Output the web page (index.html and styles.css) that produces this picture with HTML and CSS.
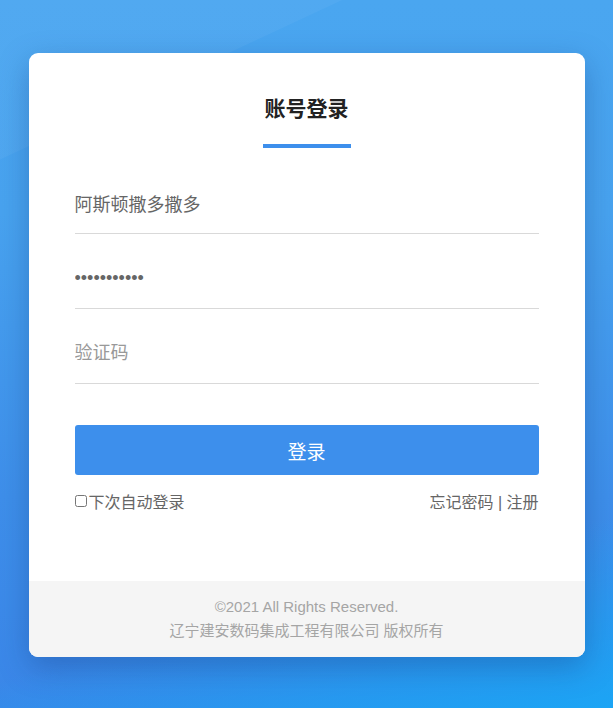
FILE: index.html
```html
<!DOCTYPE html>
<html lang="zh-CN">
<head>
    <meta charset="UTF-8">
    <title>账号登录</title>
    <link rel="stylesheet" href="styles.css">
</head>
<body>
    <div class="login-box">
        <div class="login-main">
            <h2 class="login-title">账号登录</h2>
            <div class="field">
                <input class="field-input" type="text" value="阿斯顿撒多撒多">
            </div>
            <div class="field">
                <input class="field-input pwd" type="password" value="12345678901">
            </div>
            <div class="field">
                <input class="field-input" type="text" placeholder="验证码">
            </div>
            <button class="login-button">登录</button>
            <div class="login-extra">
                <label class="remember"><input type="checkbox">下次自动登录</label>
                <span class="links"><a href="#">忘记密码</a> | <a href="#">注册</a></span>
            </div>
        </div>
        <!-- 版权 -->
        <div class="login-footer">
            <p>©2021 All Rights Reserved.</p>
            <p>辽宁建安数码集成工程有限公司 版权所有</p>
        </div>
    </div>
</body>
</html>
```

FILE: styles.css
```css
html, body {
    height: 100%;
}
body {
    margin: 0;
    font-family: "Liberation Sans", "Noto Sans CJK SC", sans-serif;
    background:
        linear-gradient(155deg, rgba(255,255,255,0.04) 0%, rgba(255,255,255,0.04) 16%, rgba(255,255,255,0) 16.1%),
        linear-gradient(165deg, rgba(24,168,246,0) 78%, rgba(24,168,246,0.55) 90%, rgba(24,168,246,0.9) 100%),
        linear-gradient(to bottom, #4aa6f0 0%, #48a3ef 30%, #3e8fea 70%, #3a86e8 100%);
    overflow: hidden;
}
.login-box {
    width: 556px;
    margin: 53px auto 0;
    background-color: #fff;
    border-radius: 9px;
    overflow: hidden;
    box-shadow: 0 10px 30px rgba(20, 60, 130, 0.35);
}
.login-main {
    padding: 41px 46px 68px;
}
.login-title {
    margin: 0 auto 31px;
    width: 88px;
    font-size: 21px;
    line-height: 30px;
    font-weight: bold;
    color: #222;
    text-align: center;
    padding-bottom: 20px;
    border-bottom: 4px solid #3d8fec;
}
.field {
    border-bottom: 1px solid #d9d9d9;
    margin-bottom: 20px;
}
.field-input {
    display: block;
    box-sizing: border-box;
    width: 100%;
    height: 54px;
    padding: 0 0 6px;
    border: none;
    outline: none;
    font-family: inherit;
    font-size: 18px;
    color: #666;
    background: transparent;
}
.field-input::placeholder {
    color: #999;
}
.login-button {
    display: block;
    width: 100%;
    height: 50px;
    margin-top: 41px;
    border: none;
    border-radius: 3px;
    background-color: #3d8fec;
    color: #fff;
    font-family: inherit;
    font-size: 19px;
    cursor: pointer;
}
.login-extra {
    display: flex;
    justify-content: space-between;
    align-items: center;
    margin-top: 14px;
    font-size: 16px;
    color: #666;
}
.remember {
    display: flex;
    align-items: center;
}
.remember input {
    margin: 0 2px 0 0;
    width: 12px;
    height: 12px;
    accent-color: #999;
}
.links a {
    color: #666;
    text-decoration: none;
}
.login-footer {
    background-color: #f5f5f5;
    padding: 14px 0;
    text-align: center;
    font-size: 15px;
    color: #a5a5a5;
}
.login-footer p {
    margin: 0;
    line-height: 24px;
}
```
